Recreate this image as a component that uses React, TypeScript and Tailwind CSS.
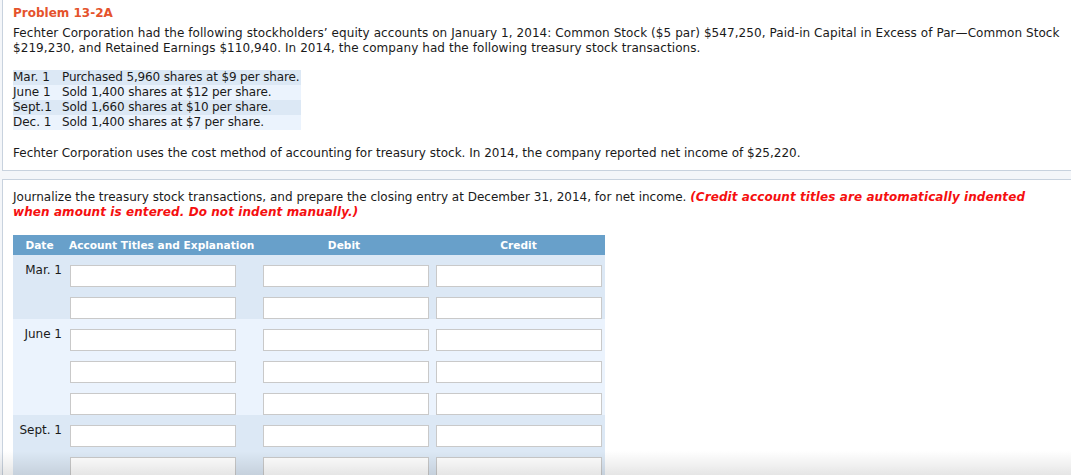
import React from 'react';

const TRANSACTIONS = [
  { date: 'Mar. 1', text: 'Purchased 5,960 shares at $9 per share.' },
  { date: 'June 1', text: 'Sold 1,400 shares at $12 per share.' },
  { date: 'Sept.1', text: 'Sold 1,660 shares at $10 per share.' },
  { date: 'Dec. 1', text: 'Sold 1,400 shares at $7 per share.' },
];

const GROUPS = [
  { date: 'Mar. 1', rows: 2, dark: true },
  { date: 'June 1', rows: 3, dark: false },
  { date: 'Sept. 1', rows: 2, dark: true },
];

const Field: React.FC = () => (
  <input type="text" className="w-[166px] h-[22px] bg-white border border-[#c9c9c9] outline-none" />
);

const EntryGroup: React.FC<{ date: string; rows: number; dark: boolean }> = ({ date, rows, dark }) => (
  <div className={`flex ${dark ? 'bg-[#dce8f5]' : 'bg-[#ebf3fd]'}`}>
    <div className="w-[53px] pt-[8px] pr-[4px] text-right leading-[15px]">{date}</div>
    <div className="flex flex-col">
      {Array.from({ length: rows }).map((_, i) => (
        <div key={i} className="flex pt-[10px]">
          <div className="w-[190px] pl-[4px]"><Field /></div>
          <div className="w-[176px] pl-[7px]"><Field /></div>
          <div className="w-[173px] pl-[4px]"><Field /></div>
        </div>
      ))}
    </div>
  </div>
);

export default function App() {
  return (
    <div className="relative w-full h-[475px] overflow-hidden bg-[#f4f6f9] text-[12px] leading-[15px] text-[#1a1a1a] font-['DejaVu_Sans',sans-serif]">
      <div className="ml-[2px] bg-white border-l border-b border-[#c8d2de] pl-[10px] pr-2 pt-[6px] pb-[9px]">
        <h1 className="font-bold text-[#e5532c] mb-[5px]">Problem 13-2A</h1>
        <p className="tracking-[0.07px]">
          Fechter Corporation had the following stockholders’ equity accounts on January 1, 2014: Common Stock ($5 par) $547,250, Paid-in Capital in Excess of Par—Common Stock $219,230, and Retained Earnings $110,940. In 2014, the company had the following treasury stock transactions.
        </p>
        <div className="mt-[14px] w-[288px] whitespace-nowrap">
          {TRANSACTIONS.map((t, i) => (
            <div key={t.date} className={`flex ${i % 2 === 0 ? 'bg-[#dce8f5]' : 'bg-[#ebf3fd]'}`}>
              <div className="w-[49px] shrink-0">{t.date}</div>
              <div className="tracking-[-0.15px]">{t.text}</div>
            </div>
          ))}
        </div>
        <p className="mt-[16px]">
          Fechter Corporation uses the cost method of accounting for treasury stock. In 2014, the company reported net income of $25,220.
        </p>
      </div>

      <div className="mt-[8px] ml-[2px] h-[400px] bg-white border-l border-t border-[#c8d2de] pl-[10px] pr-[30px] pt-[10px]">
        <p>
          Journalize the treasury stock transactions, and prepare the closing entry at December 31, 2014, for net income.{' '}
          <span className="font-bold italic text-[#f50f0f] tracking-[0.08px]">
            (Credit account titles are automatically indented when amount is entered. Do not indent manually.)
          </span>
        </p>
        <div className="mt-[15px] w-[592px]">
          <div className="flex h-[20px] items-center bg-[#68a0ca] text-white font-bold text-[10.6px] whitespace-nowrap">
            <div className="w-[53px] text-center">Date</div>
            <div className="w-[190px] pl-[3px]">Account Titles and Explanation</div>
            <div className="w-[176px] text-center">Debit</div>
            <div className="w-[173px] text-center">Credit</div>
          </div>
          {GROUPS.map((g) => (
            <EntryGroup key={g.date} {...g} />
          ))}
        </div>
      </div>

      <div className="absolute left-0 right-0 bottom-0 h-[24px] bg-linear-to-b from-transparent to-black/10 pointer-events-none" />
    </div>
  );
}
